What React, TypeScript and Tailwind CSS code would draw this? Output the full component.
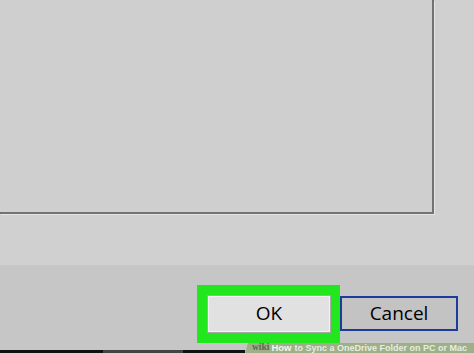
import React from "react";

export default function App() {
  return (
    <div className="w-[474px] h-[353px] overflow-hidden bg-[#d0d0d0] flex flex-col relative" style={{ fontFamily: '"Open Sans", "Liberation Sans", sans-serif' }}>
      <div className="h-[265px] shrink-0 bg-[#d0d0d0]">
        <div className="w-[434px] h-[214px] border-r-2 border-b-2 border-[#727272] shadow-[1px_1px_0_#e4e4e4] bg-[#cfcfcf]" />
      </div>
      <div className="flex-1 bg-[#c6c6c6] flex flex-col">
        <div className="flex-1 flex pl-[197px] pt-[20px]">
          <div className="w-[143px] h-[58px] bg-[#22e61e] p-[10px]">
            <div className="w-[124px] h-[38px] bg-[#e1e1e1] border border-[#a8a8a8] shadow-[inset_0_0_0_1px_#f4f4f4] flex items-center justify-center text-[19px] text-black leading-none pb-[1px]">
              OK
            </div>
          </div>
          <div className="mt-[11px] w-[118px] h-[35px] border-2 border-[#1c3c9c] bg-[#c3c3c3] flex items-center justify-center text-[19px] text-black leading-none">
            Cancel
          </div>
        </div>
        <div className="h-[3px] flex">
          <div className="w-[103px] bg-[#111]" />
          <div className="w-[80px] bg-[#444]" />
          <div className="w-[62px] bg-[#111]" />
        </div>
      </div>
      <div
        className="absolute right-0 bottom-0 w-[229px] h-[10px] bg-[#9db087] flex items-center pl-[7px] [clip-path:polygon(3px_0,100%_0,100%_100%,0_100%)] whitespace-nowrap"
        style={{ fontFamily: '"Liberation Sans", Arial, sans-serif' }}
      >
        <span className="text-[9.5px] font-bold text-[#5d6a52] leading-none" style={{ fontFamily: '"Liberation Serif", serif' }}>wiki</span>
        <span className="text-[9.5px] font-bold text-[#f2f6ee] leading-none ml-[2px]">How</span>
        <span className="text-[9px] font-bold text-[#e6ede0] leading-none ml-[3px]">to Sync a OneDrive Folder on PC or Mac</span>
      </div>
    </div>
  );
}
